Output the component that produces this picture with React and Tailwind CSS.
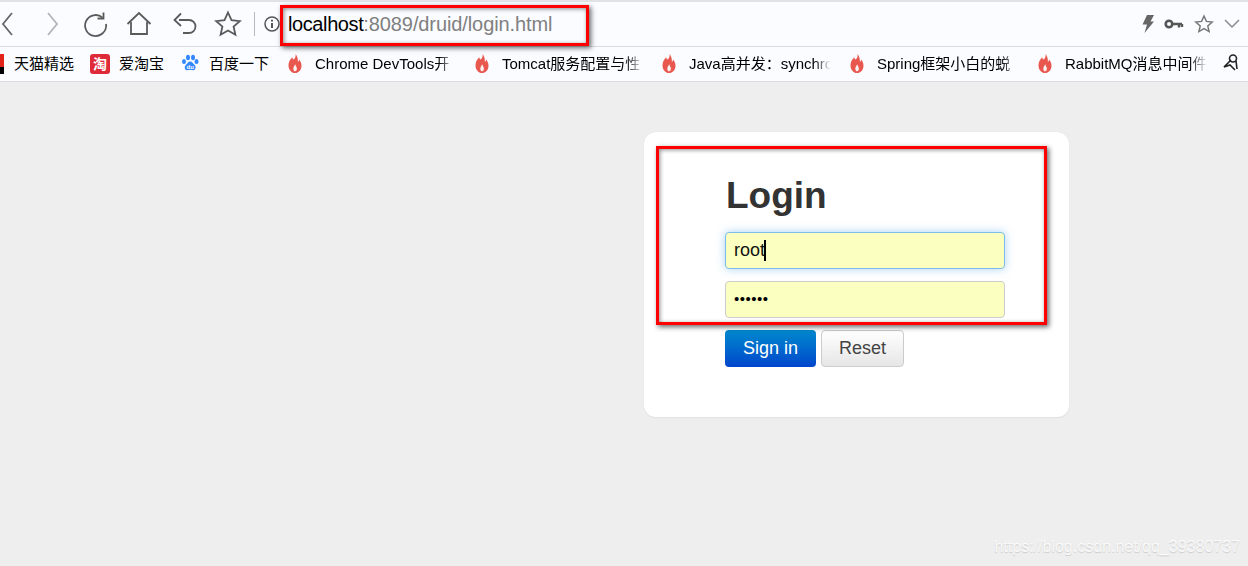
const Flame = () => (
  <svg width="14" height="20" viewBox="0 0 14 20" className="shrink-0">
    <path fill="#e8584f" d="M7.500 0c.6 2.600-.4 4-1.800 5.600C4.600 4.900 4.300 4 4.300 3.200 2 5.200.5 8 .5 11.200.5 15.800 3.400 19 7 19s6.500-3 6.500-7.300c0-2.700-1.100-4.700-2.400-6.200-.1 1.200-.5 2-1.200 2.600C10 5 9.500 2 7.500 0z" />
    <path fill="#fdf3f1" d="M7 10c.3 1.500-1.700 2.400-1.700 4.700 0 1.500.8 2.600 1.800 2.600s1.800-1 1.800-2.500c0-1.800-1.200-2.800-1.900-4.800z" />
  </svg>
);

const bookmarks = [
  { t: "Chrome DevTools开", w: "w-[141px]" },
  { t: "Tomcat服务配置与性", w: "w-[141px]" },
  { t: "Java高并发：synchro", w: "w-[142px]" },
  { t: "Spring框架小白的蜕", w: "w-[142px]" },
  { t: "RabbitMQ消息中间件", w: "w-[142px]" },
];

const Nav = ({ children, className = "" }) => (
  <svg width="30" height="30" viewBox="0 0 30 30" fill="none" stroke="currentColor" strokeWidth="1.800" className={`shrink-0 ${className}`}>
    {children}
  </svg>
);

export default function App() {
  return (
    <div className="relative h-[566px] w-[1248px] overflow-hidden bg-[#eeeeee] font-['Liberation_Sans','Noto_Sans_CJK_SC',Arial,sans-serif]">
      <header className="flex h-[47px] items-center border-b border-t-2 border-b-[#dcdcdf] border-t-[#e2e2e6] bg-[#fbfcff] text-[#5a5a5a]">
        <Nav className="ml-[-5px] text-[#666666]"><path d="M17 4 8 15l9 11" /></Nav>
        <Nav className="ml-[12px] text-[#b4b4b4]"><path d="M11 4l9 11-9 11" /></Nav>
        <Nav className="ml-[14px]"><path d="M21.500 8.600A10.500 10.500 0 1 0 25 15" /><path d="M22.500 3.500v6h-6" /></Nav>
        <Nav className="ml-[13px]"><path d="M3.500 15 15 4l11.500 11" /><path d="M7 13v12h16V13" /></Nav>
        <Nav className="ml-[15px]"><path d="M10 11h10a6.500 6.500 0 0 1 0 13h-6" /><path d="M12 4.500 5.500 11l6.500 6" /></Nav>
        <Nav className="ml-[14px]"><path d="M15 3.500l3.500 7.700 8.300.9-6.200 5.500 1.800 8.200L15 21.500 7.600 25.800l1.800-8.200-6.200-5.500 8.300-.9z" /></Nav>
        <div className="ml-[11px] h-[24px] w-px bg-[#b9b9b9]" />
        <svg width="18" height="18" viewBox="0 0 18 18" className="ml-[8px] shrink-0" fill="none" stroke="#555555" strokeWidth="1.500">
          <circle cx="9" cy="9" r="7" />
          <path d="M9 8v5M9 4.800v1.700" strokeWidth="2" />
        </svg>
        <div className="ml-[7px] whitespace-nowrap text-[20px]">
          <span className="tracking-[-0.4px] text-black">localhost</span><span className="tracking-[-0.1px] text-[#808080]">:8089/druid/login.html</span>
        </div>
        <div className="ml-auto flex items-center pr-[7px]">
          <svg width="14" height="20" viewBox="0 0 14 20" fill="#666666"><path d="M6 1h7L9.500 7.500H13L3.500 19 6 10.500H1.500z" /></svg>
          <svg width="20" height="12" viewBox="0 0 20 12" fill="none" className="ml-[9px]" stroke="#555555"><circle cx="5" cy="6" r="3.300" strokeWidth="2.600" /><path d="M8 6h10M15 6v3.500M18 6v3" strokeWidth="2.400" /></svg>
          <svg width="20" height="20" viewBox="0 0 20 20" fill="none" className="ml-[10px]" stroke="#777777" strokeWidth="1.500"><path d="M10 2l2.400 5.400 5.800.6-4.400 3.900 1.300 5.700L10 14.700l-5.100 2.900 1.300-5.700L1.800 8l5.800-.6z" /></svg>
          <svg width="18" height="12" viewBox="0 0 18 12" fill="none" className="ml-[9px]" stroke="#8a8a8a" strokeWidth="1.500"><path d="M2 2l7 7 7-7" /></svg>
        </div>
      </header>

      <nav className="flex h-[35px] items-center overflow-hidden border-b border-[#dcdcdf] bg-[#fbfcff] text-[15px] text-black">
        <div className="flex h-[20px] w-[4px] shrink-0 flex-col">
          <div className="h-[13px] bg-[#e2231a]" />
          <div className="h-[7px] bg-black" />
        </div>
        <span className="ml-[10px] w-[61px] shrink-0 whitespace-nowrap pt-px">天猫精选</span>
        <div className="ml-[15px] flex h-[20px] w-[20px] shrink-0 items-center justify-center rounded-[3px] bg-[#df2a3a] text-[14px] font-bold leading-none text-white">淘</div>
        <span className="ml-[9px] w-[46px] shrink-0 whitespace-nowrap pt-px">爱淘宝</span>
        <svg width="18" height="20" viewBox="0 0 18 20" className="ml-[16px] shrink-0" fill="#3388ff">
          <ellipse cx="3" cy="7.500" rx="2" ry="2.600" />
          <ellipse cx="7" cy="3.500" rx="2" ry="2.800" />
          <ellipse cx="12" cy="3.500" rx="2" ry="2.800" />
          <ellipse cx="15.500" cy="7.500" rx="2" ry="2.600" />
          <path d="M9.300 7.500c2 0 2.800 2 4.200 3.300 1.700 1.700 1.500 5.200-1.200 5.400-1.200.1-2-.5-3-.5s-2 .6-3.300.5C3.200 16 3.200 12.700 5 10.800c1.500-1.400 2.200-3.300 4.300-3.300z" />
          <text x="9.200" y="15" textAnchor="middle" fontSize="6" fontWeight="700" fill="#ffffff">du</text>
        </svg>
        <span className="ml-[10px] w-[60px] shrink-0 whitespace-nowrap pt-px">百度一下</span>
        {bookmarks.map((b) => (
          <div key={b.t} className="ml-[19px] flex shrink-0 items-center">
            <Flame />
            <span className={`ml-[13px] ${b.w} whitespace-nowrap pt-px [mask-image:linear-gradient(to_right,black_88%,transparent)]`}>{b.t}</span>
          </div>
        ))}
        <svg width="20" height="20" viewBox="0 0 20 20" fill="none" stroke="#222222" strokeWidth="1.600" className="absolute left-[1222px] top-[52px]">
          <circle cx="11" cy="6.500" r="3.500" />
          <path d="M14 9 15 17M9 8 2 15l6-2 5 5" />
        </svg>
      </nav>

      <main className="pl-[644px] pt-[50px]">
        <div className="h-[286px] w-[425px] rounded-[12px] border-b border-[#e3e3e3] bg-white pl-[81px] pt-[41px] shadow-[0_0_1px_rgba(0,0,0,0.12)]">
          <h1 className="pl-px text-[37px] font-bold leading-[45px] text-[#333333]">Login</h1>
          <div className="mt-[14px] flex h-[37px] w-[280px] items-center rounded-[4px] border border-[#7dbcea] bg-[#fbffbf] pl-[8px] text-[18px] text-[#111111] shadow-[0_0_8px_rgba(82,168,236,0.5)]">
            root<span className="ml-[-1px] h-[21px] w-[1.500px] bg-black" />
          </div>
          <div className="mt-[12px] flex h-[37px] w-[280px] items-center rounded-[4px] border border-[#cccccc] bg-[#fbffbf] pl-[8px] text-[15px] tracking-[0.5px] text-black">
            ••••••
          </div>
          <div className="mt-[12px] flex gap-[5px]">
            <button className="h-[37px] w-[91px] rounded-[4px] bg-gradient-to-b from-[#0088cc] to-[#0044cc] text-[18px] text-white">Sign in</button>
            <button className="h-[37px] w-[83px] rounded-[4px] border border-[#cccccc] bg-gradient-to-b from-white to-[#e6e6e6] text-[18px] text-[#444444]">Reset</button>
          </div>
        </div>
      </main>

      <div className="pointer-events-none absolute left-[280px] top-[5px] h-[41px] w-[309px] border-[3px] border-[#ff0000] shadow-[2px_2px_5px_rgba(0,0,0,0.6),inset_1px_1px_4px_rgba(0,0,0,0.45)]" />
      <div className="pointer-events-none absolute left-[656px] top-[146px] h-[179px] w-[391px] border-[3px] border-[#ff0000] shadow-[2px_2px_5px_rgba(0,0,0,0.6),inset_1px_1px_4px_rgba(0,0,0,0.45)]" />

      <div className="absolute bottom-[7px] right-[8px] text-[16px] text-white/80 [text-shadow:0_1px_1px_rgba(0,0,0,0.15)]">https://blog.csdn.net/qq_39380737</div>
    </div>
  );
}
